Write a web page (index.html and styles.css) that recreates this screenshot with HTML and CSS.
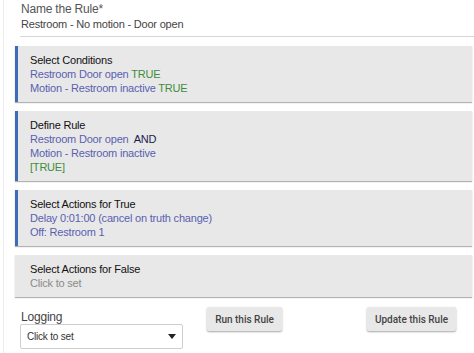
FILE: index.html
```html
<!DOCTYPE html>
<html>
<head>
  <title>Rule Machine</title>
  <link rel="stylesheet" href="styles.css">
</head>
<body>
  <div class="page">
    <div class="name-field">
      <div class="label">Name the Rule*</div>
      <div class="value">Restroom - No motion - Door open</div>
    </div>

    <div class="card active">
      <div class="title">Select Conditions</div>
      <div class="item">Restroom Door open <span class="ok">TRUE</span></div>
      <div class="item">Motion - Restroom inactive <span class="ok">TRUE</span></div>
    </div>

    <div class="card active">
      <div class="title">Define Rule</div>
      <div class="item">Restroom Door open&nbsp; <span class="op">AND</span></div>
      <div class="item">Motion - Restroom inactive</div>
      <div class="item"><span class="ok">[TRUE]</span></div>
    </div>

    <div class="card active">
      <div class="title">Select Actions for True</div>
      <div class="item">Delay 0:01:00 (cancel on truth change)</div>
      <div class="item">Off: Restroom 1</div>
    </div>

    <div class="card">
      <div class="title">Select Actions for False</div>
      <div class="item muted">Click to set</div>
    </div>

    <div class="footer">
      <div class="logging">
        <div class="label">Logging</div>
        <div class="select">
          <span>Click to set</span>
          <svg width="8" height="5" viewBox="0 0 8 5"><path d="M0 0h8L4 5z" fill="#222"/></svg>
        </div>
      </div>
      <button class="btn run">Run this Rule</button>
      <button class="btn update">Update this Rule</button>
    </div>
  </div>
</body>
</html>
```

FILE: styles.css
```css
body {
  margin: 0;
  background-color: #fff;
  font-family: 'Liberation Sans', Arial, sans-serif;
  letter-spacing: -0.2px;
  color: #222;
}
.page {
  margin-left: 3px;
  border-left: 1px solid #ececec;
  height: 353px;
  padding: 2px 2px 0 11px;
  box-sizing: border-box;
}
.name-field {
  margin-left: 5px;
  border-bottom: 1px solid #d6d6d6;
  padding: 0 0 3px 1px;
  margin-right: -2px;
}
.label {
  font-size: 12px;
  line-height: 14px;
  color: #555;
}
.name-field .value {
  font-size: 11px;
  line-height: 17px;
  color: #444;
}
.card {
  background-color: #e8e8e8;
  margin-top: 9px;
  padding: 7px 12px 7px 15px;
  box-shadow: 0 1px 1px rgba(0,0,0,0.3);
  font-size: 11px;
  line-height: 14px;
}
.card.active {
  border-left: 3px solid #3a6db6;
  padding-left: 12px;
}
.title {
  color: #111;
}
.item {
  color: #5a5fb0;
}
.ok {
  color: #3f8d3a;
}
.op {
  color: #1d1b4e;
}
.muted {
  color: #8a8a8a;
}
.footer {
  display: flex;
  align-items: flex-start;
  margin-top: 10px;
}
.logging {
  margin-left: 5px;
  margin-top: 3px;
}
.logging .label {
  color: #444;
  margin-left: 1px;
}
.select {
  width: 163px;
  height: 25px;
  box-sizing: border-box;
  border: 1px solid #cfcfcf;
  border-radius: 2px;
  display: flex;
  align-items: center;
  justify-content: space-between;
  padding: 0 6px 0 6px;
  font-size: 10px;
  color: #333;
}
.btn {
  font-family: Roboto, sans-serif;
  font-weight: 500;
  font-size: 10px;
  letter-spacing: normal;
  white-space: nowrap;
  color: #444;
  background-color: #e8e8e8;
  border: none;
  border-radius: 2px;
  box-shadow: 0 1px 2px rgba(0,0,0,0.35);
  height: 24px;
  padding: 0;
  cursor: pointer;
}
.run {
  margin-left: 24px;
  width: 75px;
}
.update {
  margin-left: auto;
  margin-right: 16px;
  width: 89px;
}
```
